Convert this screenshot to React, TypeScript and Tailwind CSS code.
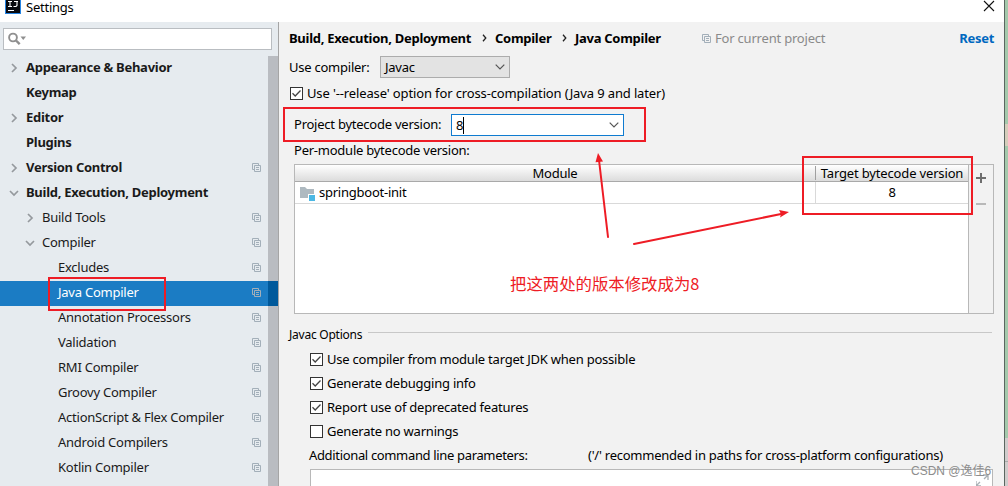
import type { ReactNode } from "react";
import { clsx } from "clsx";

interface TreeItem {
  label: string;
  level: 0 | 1 | 2;
  state?: "open" | "closed";
  project?: boolean;
  selected?: boolean;
}

const TREE: TreeItem[] = [
  { label: "Appearance & Behavior", level: 0, state: "closed" },
  { label: "Keymap", level: 0 },
  { label: "Editor", level: 0, state: "closed" },
  { label: "Plugins", level: 0 },
  { label: "Version Control", level: 0, state: "closed", project: true },
  { label: "Build, Execution, Deployment", level: 0, state: "open" },
  { label: "Build Tools", level: 1, state: "closed", project: true },
  { label: "Compiler", level: 1, state: "open", project: true },
  { label: "Excludes", level: 2, project: true },
  { label: "Java Compiler", level: 2, project: true, selected: true },
  { label: "Annotation Processors", level: 2, project: true },
  { label: "Validation", level: 2, project: true },
  { label: "RMI Compiler", level: 2, project: true },
  { label: "Groovy Compiler", level: 2, project: true },
  { label: "ActionScript & Flex Compiler", level: 2, project: true },
  { label: "Android Compilers", level: 2, project: true },
  { label: "Kotlin Compiler", level: 2, project: true },
];

const OPTIONS = [
  { label: "Use compiler from module target JDK when possible", checked: true },
  { label: "Generate debugging info", checked: true },
  { label: "Report use of deprecated features", checked: true },
  { label: "Generate no warnings", checked: false },
];

function ProjectIcon() {
  return (
    <svg width="9" height="9" viewBox="0 0 9 9" className="shrink-0" fill="none" stroke="#a3afb9">
      <path d="M2 6.5H.5V.5h6V2" />
      <path d="M2.5 2.5h6v6h-6zM4 4.5h3M4 6.5h3" />
    </svg>
  );
}

function TreeArrow({ state }: { state?: "open" | "closed" }) {
  if (!state) return null;
  return (
    <svg width="10" height="10" viewBox="0 0 10 10" fill="none" stroke="#95999d" strokeWidth="1.7">
      <path d={state === "closed" ? "M3 1l4 4-4 4" : "M1 3l4 4 4-4"} />
    </svg>
  );
}

function Chevron() {
  return (
    <svg width="10" height="6" viewBox="0 0 10 6" fill="none" stroke="#555" strokeWidth="1.2">
      <path d="M.7.7L5 5 9.3.7" />
    </svg>
  );
}

function CrumbArrow() {
  return (
    <svg width="5" height="8" viewBox="0 0 5 8" className="mr-[8px] shrink-0" fill="none" stroke="#222" strokeWidth="1.3">
      <path d="M1 .8L3.800 4 1 7.200" />
    </svg>
  );
}

function CheckBox({ checked, children }: { checked: boolean; children: ReactNode }) {
  return (
    <label className="flex items-center gap-1 whitespace-nowrap">
      <span className="h-[13px] w-[13px] shrink-0 border border-[#333] bg-white">
        {checked && (
          <svg width="11" height="11" viewBox="0 0 11 11" fill="none" stroke="#444" strokeWidth="1.3">
            <path d="M1.5 5.3L4.2 8l5.3-5.5" />
          </svg>
        )}
      </span>
      <span>{children}</span>
    </label>
  );
}

function TitleBar() {
  return (
    <header className="flex h-[22px] shrink-0 justify-between bg-white">
      <div className="flex">
        <svg width="16" height="22" viewBox="0 0 16 22" className="ml-[5px]">
          <path d="M0 0h16v14H0z" fill="#2483e2" />
          <path d="M1 0h14v13H1z" fill="#080a10" />
          <path d="M3 1.5h4M5 1.5v5M3 6.5h4M9 1.5h4M12 1.5v4l-1 1H8.5M3 10.5h6" stroke="#fff" strokeWidth="1.1" fill="none" />
        </svg>
        <span className="ml-[5px] text-[13px] leading-[14px]">Settings</span>
      </div>
      <svg width="12" height="12" viewBox="0 0 12 12" className="mr-[9px]" stroke="#111" strokeWidth="1.1">
        <path d="M1 1l10 10M11 1L1 11" />
      </svg>
    </header>
  );
}

function Sidebar() {
  return (
    <aside className="flex w-[278px] shrink-0 flex-col bg-[#e6ebef] pt-[6px]">
      <div className="ml-[3px] flex h-[22px] w-[269px] shrink-0 items-center border border-[#b9bdc1] bg-white pl-1">
        <svg width="20" height="14" viewBox="0 0 20 14" fill="none">
          <circle cx="5" cy="5.5" r="3.9" stroke="#8f8f8f" strokeWidth="1.9" />
          <path d="M8 8.5l3.7 3.7" stroke="#8f8f8f" strokeWidth="2.4" />
          <path d="M12.5 4.5h5.5L15.25 8z" fill="#8f8f8f" />
        </svg>
      </div>
      <div className="mt-[6px] flex flex-1">
        <ul className="relative z-10 w-[268px] shrink-0">
          {TREE.map((item) => (
            <li
              key={item.label}
              className={clsx(
                "flex h-[25px] items-center whitespace-nowrap pb-[2px] pr-[7px]",
                item.level === 0 && "pl-[9px] font-bold tracking-[-0.28px]",
                item.level === 1 && "pl-[25px]",
                item.level === 2 && "pl-[41px]",
                item.selected
                  ? "w-[278px] bg-[linear-gradient(to_right,#1b7cc4_268px,#00599b_268px)] pr-[17px] text-white"
                  : "text-[#1a1a1a]",
              )}
            >
              <span className="w-[17px] shrink-0">
                <TreeArrow state={item.state} />
              </span>
              <span className="-mt-[2px] flex-1">{item.label}</span>
              {item.project && <ProjectIcon />}
            </li>
          ))}
        </ul>
        <div className="flex-1 bg-[#b9bcc1]" />
      </div>
    </aside>
  );
}

function ModuleTable() {
  return (
    <div className="ml-[5px] mt-[4px] flex h-[150px] w-[700px] shrink-0 border border-[#b8b8b8] bg-white">
      <div className="flex-1">
        <div className="flex h-[17px] border-b border-[#a9a9a9] bg-linear-to-b from-white to-[#dcdcdc] text-center leading-[16px]">
          <div className="my-px w-[521px] border-r border-[#a0a0a0] leading-[14px]">Module</div>
          <div className="flex-1 whitespace-nowrap tracking-[-0.16px]">Target bytecode version</div>
        </div>
        <div className="flex h-[22px] border-b border-[#d9d9d9] leading-[20px]">
          <div className="flex w-[521px] items-center border-r border-[#d9d9d9] pl-[5px]">
            <svg width="16" height="16" viewBox="0 0 16 16">
              <path d="M0 2h5l2 2h7v9H0z" fill="#aeb9c0" />
              <path d="M8 9h8v7H8z" fill="#fff" />
              <path d="M9 10h6v6H9z" fill="#4cb8e4" />
            </svg>
            <span className="-mt-[2px] ml-[3px]">springboot-init</span>
          </div>
          <div className="flex-1 text-center">8</div>
        </div>
      </div>
      <div className="flex w-[25px] flex-col items-center border-l border-[#b8b8b8] bg-[#f2f2f2]">
        <svg width="12" height="36" viewBox="0 0 12 36" className="mt-[8px]" strokeWidth="2">
          <path d="M1 5h10M6 0v10" stroke="#6e6e6e" />
          <path d="M1 31h10" stroke="#b9b9b9" />
        </svg>
      </div>
    </div>
  );
}

function CompilerPage() {
  return (
    <main className="flex min-w-0 flex-1 flex-col border-l border-[#a5a5a5] bg-[#f2f2f2] pl-[10px]">
      <div className="mt-[6px] flex h-[20px] shrink-0 items-center whitespace-nowrap font-bold tracking-[-0.28px]">
        <span className="w-[193px]">Build, Execution, Deployment</span>
        <CrumbArrow />
        <span className="w-[67px]">Compiler</span>
        <CrumbArrow />
        <span className="w-[127px]">Java Compiler</span>
        <ProjectIcon />
        <span className="ml-1 font-normal tracking-[-0.2px] text-[#8a8a8a]">For current project</span>
        <span className="ml-auto mr-[10px] text-[#0068c0]">Reset</span>
      </div>
      <div className="mt-[8px] flex h-[22px] shrink-0 items-center">
        <span className="w-[91px]">Use compiler:</span>
        <div className="flex h-[22px] w-[130px] items-center justify-between border border-[#acacac] bg-[#e3e3e3] pl-1 pr-[4px]">
          <span>Javac</span>
          <Chevron />
        </div>
      </div>
      <div className="ml-px mt-[5px] flex h-[20px] shrink-0 items-center tracking-[-0.13px]">
        <CheckBox checked>Use &apos;--release&apos; option for cross-compilation (Java 9 and later)</CheckBox>
      </div>
      <div className="ml-[5px] mt-[11px] flex h-[22px] shrink-0 items-center">
        <span className="-mt-[2px] w-[157px]">Project bytecode version:</span>
        <div className="flex h-[22px] w-[173px] items-center border border-[#0f7bd0] bg-white pl-1 pr-[4px]">
          <span>8</span>
          <span className="h-[17px] w-px bg-black" />
          <span className="ml-auto">
            <Chevron />
          </span>
        </div>
      </div>
      <div className="ml-[5px] mt-[4px] h-[20px] shrink-0 leading-[20px]">Per-module bytecode version:</div>
      <ModuleTable />
      <div className="mt-[9px] flex h-[20px] shrink-0 items-center">
        <span className="mt-[3px] w-[79px] text-[12px]">Javac Options</span>
        <div className="mr-[12px] mt-[-2px] h-px flex-1 bg-[#c8c8c8]" />
      </div>
      <div className="ml-[21px] mt-[4px] flex shrink-0 flex-col">
        {OPTIONS.map((o) => (
          <div key={o.label} className="flex h-[24px] items-center tracking-[-0.22px]">
            <CheckBox checked={o.checked}>{o.label}</CheckBox>
          </div>
        ))}
        <div className="-ml-px flex h-[23px] items-center whitespace-nowrap">
          <span className="w-[279px] tracking-[-0.34px]">Additional command line parameters:</span>
          <span>(&apos;/&apos; recommended in paths for cross-platform configurations)</span>
        </div>
        <div className="mt-[3px] flex h-[40px] w-[683px] justify-end border border-[#b8b8b8] bg-white">
          <svg width="16" height="16" viewBox="0 0 16 16" className="mt-[4px]" fill="none" stroke="#a9b0b5" strokeWidth="1.3">
            <path d="M7 1h5v5M12 1L8 5M0 7v5h5M0 12l4-4" />
          </svg>
        </div>
      </div>
    </main>
  );
}

/** Red boxes, arrows and note drawn over the dialog, plus the watermark. */
function Annotations() {
  return (
    <div className="pointer-events-none absolute inset-0 z-20 tracking-normal">
      <div className="absolute left-[48px] top-[277px] h-[34px] w-[118px] border-2 border-[#ee1c25]" />
      <div className="absolute left-[283px] top-[107px] h-[35px] w-[363px] border-2 border-[#ee1c25]" />
      <div className="absolute left-[802px] top-[156px] h-[59px] w-[171px] border-2 border-[#ee1c25]" />
      <svg
        className="absolute left-[590px] top-[150px]"
        width="205"
        height="100"
        viewBox="590 150 205 100"
        stroke="#ee1c25"
        fill="#ee1c25"
        strokeWidth="2"
        strokeLinecap="round"
      >
        <path d="M608 237L599 160M634 244L781 214" />
        <path d="M598 153l5 8.500-7.500.7zM789 212l-9 5.500 1-3.500-2-4z" stroke="none" />
      </svg>
      <span className="absolute left-[510px] top-[271px] whitespace-nowrap font-['Noto_Sans_CJK_SC',sans-serif] text-[16.4px] leading-[24px] text-[#ee1c25]">
        把这两处的版本修改成为8
      </span>
      <span className="absolute left-[911px] top-[462px] whitespace-nowrap font-['Liberation_Sans','Noto_Sans_CJK_SC',sans-serif] text-[12px] leading-[18px] text-[#8d8d8d]">
        CSDN @逸佳6
      </span>
    </div>
  );
}

export default function App() {
  return (
    <div className="relative flex h-[486px] w-[1008px] overflow-hidden bg-[#f2f2f2] font-['Noto_Sans',sans-serif] text-[13px] leading-[18px] tracking-[-0.24px] text-black">
      <div className="flex w-[1004px] flex-col">
        <TitleBar />
        <div className="flex min-h-0 flex-1 overflow-hidden">
          <Sidebar />
          <CompilerPage />
        </div>
      </div>
      <div className="flex w-[4px] flex-col border-l border-[#5b6660]">
        <div className="h-[124px] bg-[#a4c9ac]" />
        <div className="h-[22px] bg-[#d5cdbb]" />
        <div className="h-[292px] bg-[#a4c9ac]" />
        <div className="h-[24px] border-b border-[#aaa] bg-[#d0cccc]" />
        <div className="flex-1 bg-[#d0cccc]" />
      </div>
      <Annotations />
    </div>
  );
}
